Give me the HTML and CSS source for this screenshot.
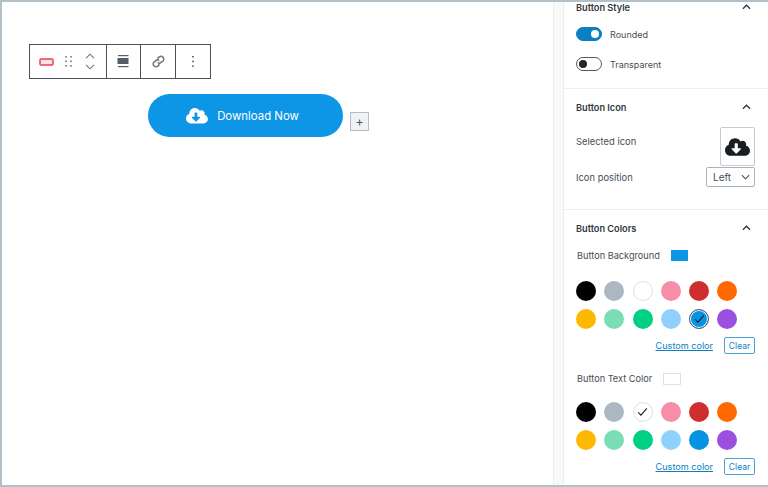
FILE: index.html
```html
<!DOCTYPE html>
<html lang="en">
<head>
<meta charset="utf-8">
<title>Button block</title>
<link rel="stylesheet" href="styles.css">
</head>
<body>
<svg class="defs" width="0" height="0" aria-hidden="true">
  <symbol id="cloud" viewBox="0 0 640 512"><path d="M537.6 226.6c4.1-10.7 6.4-22.4 6.4-34.6 0-53-43-96-96-96-19.7 0-38.1 6-53.3 16.2C367 64.2 315.3 32 256 32c-88.4 0-160 71.6-160 160 0 2.7.1 5.4.2 8.1C40.2 219.8 0 273.2 0 336c0 79.5 64.5 144 144 144h368c70.7 0 128-57.3 128-128 0-61.9-44-113.6-102.4-125.4zm-132.9 88.7L299.3 420.7c-6.2 6.2-16.4 6.2-22.6 0L171.3 315.3c-10.1-10.1-2.9-27.3 11.3-27.3H248V176c0-8.8 7.2-16 16-16h48c8.8 0 16 7.2 16 16v112h65.4c14.2 0 21.4 17.2 11.3 27.3z"/></symbol>
  <symbol id="chev-up" viewBox="0 0 10 6"><path d="M1 5l4-4 4 4" fill="none" stroke="currentColor" stroke-width="1.4"/></symbol>
  <symbol id="check" viewBox="0 0 14 12"><path d="M1.5 6.5l3.5 3.5 7.5-8.5" fill="none" stroke="currentColor" stroke-width="1.4"/></symbol>
</svg>
<div class="frame">
  <main class="canvas">
    <div class="toolbar">
      <div class="tool-group tool-first">
        <svg class="ico-block" width="15" height="8" viewBox="0 0 15 8"><rect x="1" y="1" width="13" height="6" rx="1" fill="#fde3e6" stroke="#ee3f54" stroke-width="1.5"/></svg>
        <svg class="ico-drag" width="7" height="11" viewBox="0 0 7 11" fill="#8a929a"><rect x="0" y="0" width="2" height="1.6"/><rect x="5" y="0" width="2" height="1.6"/><rect x="0" y="4.5" width="2" height="1.6"/><rect x="5" y="4.5" width="2" height="1.6"/><rect x="0" y="9" width="2" height="1.6"/><rect x="5" y="9" width="2" height="1.6"/></svg>
        <div class="movers">
          <svg width="10" height="6" viewBox="0 0 10 6"><path d="M1 5.2l4-4 4 4" fill="none" stroke="#6c7781" stroke-width="1.1"/></svg>
          <svg width="10" height="6" viewBox="0 0 10 6"><path d="M1 .8l4 4 4-4" fill="none" stroke="#6c7781" stroke-width="1.1"/></svg>
        </div>
      </div>
      <div class="tool-group tool-small">
        <svg width="12" height="13" viewBox="0 0 12 13" fill="#555d66"><rect x="1" y="0" width="10.5" height="1.2"/><rect x="0.5" y="3" width="11" height="6"/><rect x="1" y="11" width="10.5" height="1.2"/></svg>
      </div>
      <div class="tool-group tool-small">
        <svg width="13" height="13" viewBox="0 0 13 13" fill="none" stroke="#6c7781" stroke-width="1.5"><path d="M5.5 3.6l1.7-1.7a2.3 2.3 0 0 1 3.4 0l.5.5a2.3 2.3 0 0 1 0 3.4L9 7.4a2.3 2.3 0 0 1-3.2 0"/><path d="M7.5 9.4l-1.7 1.7a2.3 2.3 0 0 1-3.4 0l-.5-.5a2.3 2.3 0 0 1 0-3.4L4 5.6a2.3 2.3 0 0 1 3.2 0"/></svg>
      </div>
      <div class="tool-group tool-small tool-last">
        <svg width="2" height="11" viewBox="0 0 2 11" fill="#6c7781"><rect width="2" height="1.5"/><rect y="4.7" width="2" height="1.5"/><rect y="9.4" width="2" height="1.5"/></svg>
      </div>
    </div>
    <div class="button-row">
      <a class="cta"><svg class="cta-icon"><use href="#cloud"/></svg><span>Download Now</span></a>
      <span class="add">+</span>
    </div>
  </main>
  <div class="strip"></div>
  <aside class="sidebar">
    <section class="panel panel-style">
      <header class="panel-head"><h2>Button Style</h2><svg class="chev"><use href="#chev-up"/></svg></header>
      <div class="toggle-row"><span class="toggle on"><i></i></span><span>Rounded</span></div>
      <div class="toggle-row toggle-row-2"><span class="toggle"><i></i></span><span>Transparent</span></div>
    </section>
    <section class="panel panel-icon">
      <header class="panel-head"><h2>Button Icon</h2><svg class="chev"><use href="#chev-up"/></svg></header>
      <div class="field field-icon"><span class="field-label">Selected icon</span><span class="icon-box"><svg><use href="#cloud"/></svg></span></div>
      <div class="field field-pos"><span class="field-label">Icon position</span><span class="select">Left<svg width="9" height="6" viewBox="0 0 10 6"><path d="M1 1l4 4 4-4" fill="none" stroke="#555d66" stroke-width="1.3"/></svg></span></div>
    </section>
    <section class="panel panel-colors">
      <header class="panel-head"><h2>Button Colors</h2><svg class="chev"><use href="#chev-up"/></svg></header>
      <div class="color-head color-head-1"><span>Button Background</span><i class="chip chip-blue"></i></div>
      <div class="swatches">
        <i class="sw black"></i><i class="sw gray"></i><i class="sw white"></i><i class="sw pink"></i><i class="sw red"></i><i class="sw orange"></i>
        <i class="sw amber"></i><i class="sw mint"></i><i class="sw green"></i><i class="sw sky"></i><i class="sw blue selected"><svg><use href="#check"/></svg></i><i class="sw purple"></i>
      </div>
      <div class="color-actions"><a class="custom">Custom color</a><span class="clear">Clear</span></div>
      <div class="color-head color-head-2"><span>Button Text Color</span><i class="chip chip-white"></i></div>
      <div class="swatches swatches-2">
        <i class="sw black"></i><i class="sw gray"></i><i class="sw white"><svg><use href="#check"/></svg></i><i class="sw pink"></i><i class="sw red"></i><i class="sw orange"></i>
        <i class="sw amber"></i><i class="sw mint"></i><i class="sw green"></i><i class="sw sky"></i><i class="sw blue"></i><i class="sw purple"></i>
      </div>
      <div class="color-actions"><a class="custom">Custom color</a><span class="clear">Clear</span></div>
    </section>
  </aside>
</div>
</body>
</html>
```
FILE: styles.css
```css
* { box-sizing: border-box; }
html, body { margin: 0; padding: 0; }
body { font-family: Inter, "Noto Sans", sans-serif; color: #484e55; background: #fff; }
.defs { display: block; height: 0; }
.frame {
  display: flex;
  width: 768px;
  height: 487px;
  overflow: hidden;
  border-top: 2px solid #b4c0c8;
  border-left: 2px solid #b4c0c8;
  border-bottom: 2px solid #b4c0c8;
}
.canvas { width: 551px; flex: none; padding: 42px 0 0 27px; background: #fff; }
.strip { width: 11px; flex: none; background: #f8f9f9; border-left: 1px solid #eceeef; border-right: 1px solid #e9ebec; }
.sidebar { flex: 1; min-width: 0; background: #fff; }

.toolbar { display: flex; width: 182px; height: 35px; border: 1px solid #4b5157; background: #fff; }
.tool-group { display: flex; align-items: center; justify-content: center; border-right: 1px solid #4b5157; }
.tool-first { width: 77px; padding-left: 2px; justify-content: flex-start; }
.tool-small { width: 35px; }
.tool-last { border-right: 0; width: 34px; }
.ico-block { margin-left: 7px; }
.ico-drag { margin-left: 11px; }
.movers { display: flex; flex-direction: column; gap: 5px; margin-left: 13px; }
.movers svg { display: block; }

.button-row { display: flex; align-items: flex-start; margin: 15px 0 0 119px; }
.cta {
  display: flex; align-items: center; justify-content: center; gap: 9px;
  width: 195px; height: 43px; padding-right: 6px; border-radius: 22px;
  background: #0d96e6; color: #fff; font-size: 11.4px;
}
.cta-icon { width: 22px; height: 17.5px; fill: #fff; }
.add {
  display: flex; align-items: center; justify-content: center;
  width: 19px; height: 19px; margin: 18px 0 0 7px;
  border: 1px solid #b5bcc2; background: #f1f2f3; color: #555d66; font-size: 13px; line-height: 1;
}

.panel { padding: 0 13px 0 12px; border-bottom: 1px solid #edeff0; font-size: 9.4px; }
.panel:last-child { border-bottom: 0; }
.panel-style { height: 88px; }
.panel-icon { height: 121px; padding-top: 12px; }
.panel-colors { padding-top: 12px; }
.panel-head { display: flex; align-items: center; justify-content: space-between; height: 12px; }
.panel-head h2 { margin: 0; font-size: 9.2px; font-weight: 600; color: #32373c; }
.chev { width: 9px; height: 6px; color: #32373c; margin-right: 4px; }
.panel-style .panel-head { margin-top: -1px; }

.toggle-row { display: flex; align-items: center; gap: 8px; height: 14px; margin-top: 14px; font-size: 9px; }
.toggle-row-2 { margin-top: 16px; }
.toggle { display: flex; align-items: center; width: 26px; height: 14px; padding: 2px; border: 1px solid #50575d; border-radius: 7px; background: #fff; }
.toggle i { width: 8px; height: 8px; border-radius: 50%; background: #23282d; }
.toggle.on { justify-content: flex-end; background: #0a7fc2; border-color: #0a7fc2; }
.toggle.on i { background: #fff; }

.field { display: flex; align-items: flex-start; justify-content: space-between; }
.field-icon { height: 39px; margin-top: 14px; }
.field-icon .field-label { margin-top: 9px; }
.field-pos { height: 20px; margin-top: 1px; }
.field-pos .field-label { margin-top: 5px; }
.icon-box { display: flex; align-items: center; justify-content: center; width: 35px; height: 39px; border: 1px solid #c5cbd0; border-radius: 2px; }
.icon-box svg { width: 25px; height: 20px; fill: #191e23; }
.select { display: flex; align-items: center; justify-content: space-between; width: 49px; height: 20px; padding: 0 4px 0 6px; border: 1px solid #a9b2b9; border-radius: 2px; font-size: 10px; }

.color-head { display: flex; align-items: center; gap: 11px; height: 11px; margin-left: 1px; font-size: 9.2px; }
.color-head-1 { margin-top: 16px; }
.color-head-2 { margin-top: 19px; }
.chip { width: 17px; height: 11px; }
.chip-blue { background: #0d96e6; }
.chip-white { width: 18px; height: 12px; background: #fff; border: 1px solid #dfe2e4; }

.swatches { display: grid; grid-template-columns: repeat(6, 20px); column-gap: 8.3px; row-gap: 8px; margin-top: 20px; }
.swatches-2 { margin-top: 18px; }
.sw { display: flex; align-items: center; justify-content: center; width: 20px; height: 20px; border-radius: 50%; }
.sw svg { width: 11px; height: 10px; color: #191e23; }
.black { background: #000; }
.gray { background: #abb8c3; }
.white { background: #fff; border: 1px solid #dcdfe1; }
.pink { background: #f78da7; }
.red { background: #cf2e2e; }
.orange { background: #ff6900; }
.amber { background: #fcb900; }
.mint { background: #7bdcb5; }
.green { background: #00d084; }
.sky { background: #8ed1fc; }
.blue { background: #0693e3; }
.purple { background: #9b51e0; }
.selected { box-shadow: inset 0 0 0 1px #fff; border: 1.5px solid #555d66; }

.color-actions { display: flex; align-items: center; justify-content: flex-end; gap: 11px; height: 17px; margin-top: 8px; }
.custom { color: #0a7fc2; text-decoration: underline; font-size: 9.1px; }
.clear { display: flex; align-items: center; justify-content: center; width: 31px; height: 17px; border: 1px solid #4aa3d4; border-radius: 2px; color: #0a7fc2; font-size: 8.5px; }
```
